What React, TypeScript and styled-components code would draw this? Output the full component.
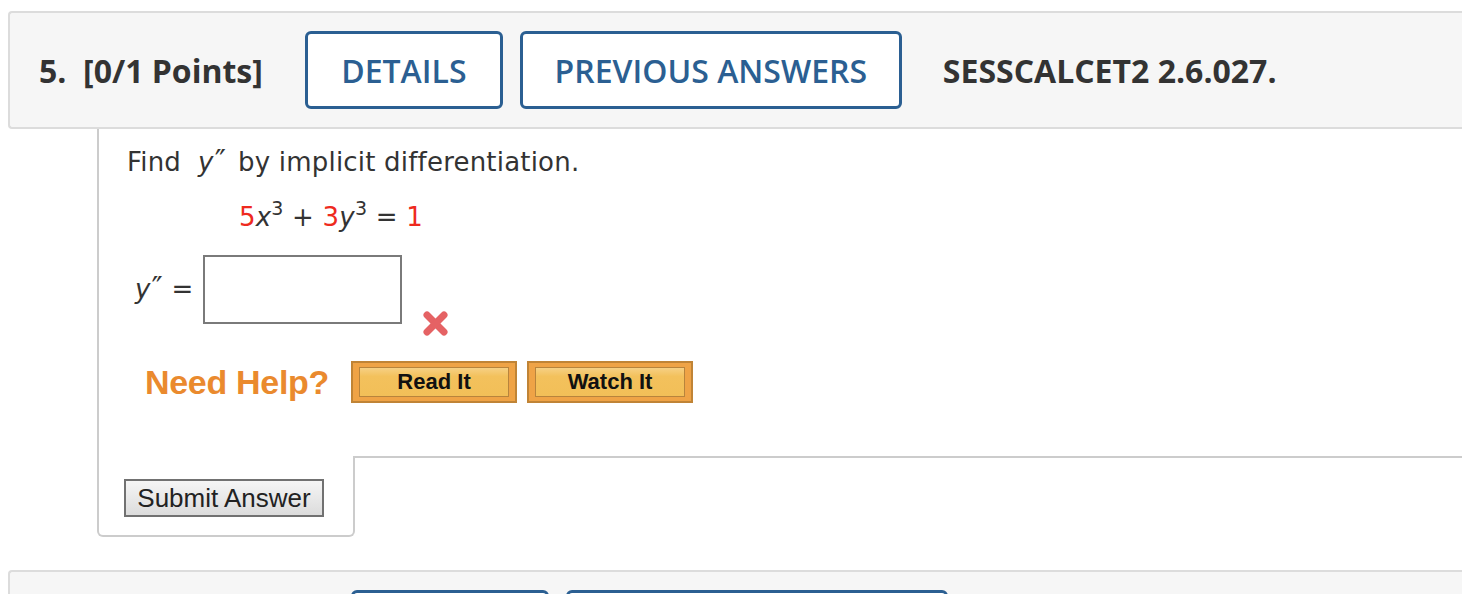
import React from "react";
import styled, { createGlobalStyle } from "styled-components";

const GlobalStyle = createGlobalStyle`
  html, body {
    margin: 0;
    padding: 0;
    background: #ffffff;
    overflow: hidden;
  }
  body {
    font-family: "DejaVu Sans", Verdana, sans-serif;
    color: #333;
  }
`;

const Page = styled.div`
  width: 1500px;
  padding: 11px 0 0 8px;
  display: flex;
  flex-direction: column;
  gap: 33px;
`;

const Question = styled.section`
  display: flex;
  flex-direction: column;
`;

const Header = styled.header`
  display: flex;
  align-items: center;
  height: 114px;
  padding-left: 29px;
  background: #f6f6f6;
  border: 2px solid #dcdcdc;
  border-right: none;
  border-top-left-radius: 4px;
  border-bottom-left-radius: 4px;
  font-family: "Open Sans", sans-serif;
`;

const Title = styled.h2<{ $gap: number }>`
  margin: 0 ${(p) => p.$gap}px 0 0;
  font-size: 32px;
  font-weight: 700;
  color: #333;
  white-space: pre;
`;

const NavButton = styled.button<{ $w: number }>`
  width: ${(p) => p.$w}px;
  height: 78px;
  margin-right: 17px;
  background: #ffffff;
  border: 3px solid #2b5f92;
  border-radius: 6px;
  color: #2b5f92;
  font-family: "Open Sans", sans-serif;
  font-size: 32px;
  font-weight: 600;
  padding: 0;
`;

const Code = styled.span`
  margin-left: 24px;
  font-size: 32px;
  font-weight: 700;
  color: #333;
`;

const Body = styled.div`
  margin-left: 89px;
  display: flex;
  flex-direction: column;
`;

const Content = styled.div`
  border-left: 2px solid #cccccc;
  padding: 17px 0 53px 28px;
  display: flex;
  flex-direction: column;
  font-size: 26px;
  letter-spacing: 0.2px;
  color: #333;
`;

const Prompt = styled.p`
  margin: 0;
  line-height: 32px;
`;

const MathVar = styled.span`
  font-style: italic;
  margin: 0 12px 0 17px;
`;

const Prime = styled.span`
  font-style: normal;
  font-size: 30px;
  line-height: 0;
  margin-left: 1px;
`;

const Equation = styled.div`
  margin: 23px 0 0 112px;
  line-height: 32px;
  white-space: pre;
`;

const Coef = styled.span`
  color: #ee2a1e;
`;

const Ital = styled.i`
  font-style: italic;
`;

const Sup = styled.sup`
  font-size: 19px;
  vertical-align: 11px;
  line-height: 0;
`;

const AnswerRow = styled.div`
  display: flex;
  align-items: flex-start;
  margin: 22px 0 0 8px;
`;

const AnswerLabel = styled.span`
  line-height: 69px;
  margin-right: 10px;
  white-space: pre;
`;

const AnswerInput = styled.input`
  box-sizing: border-box;
  width: 199px;
  height: 69px;
  border: 2px solid #7a7a7a;
  background: #fff;
  outline: none;
`;

const WrongMark = styled.svg`
  margin: 54px 0 0 19px;
`;

const HelpRow = styled.div`
  display: flex;
  align-items: center;
  margin: 23px 0 0 18px;
  height: 42px;
`;

const HelpLabel = styled.span`
  font-family: "Liberation Sans", Arial, sans-serif;
  font-weight: 700;
  font-size: 34px;
  color: #ea8a2e;
  margin-right: 22px;
  letter-spacing: -0.3px;
`;

const HelpButton = styled.button<{ $w: number }>`
  box-sizing: border-box;
  width: ${(p) => p.$w}px;
  height: 42px;
  margin-right: 10px;
  padding: 4px 6px;
  border: 2px solid #c08436;
  background: #efa346;
  display: flex;
`;

const HelpInner = styled.span`
  flex: 1;
  display: flex;
  align-items: center;
  justify-content: center;
  border: 1px solid #b8843c;
  background: linear-gradient(#f6d084 0%, #f3c15c 30%, #f2bf58 100%);
  font-family: "Liberation Sans", Arial, sans-serif;
  font-weight: 700;
  font-size: 22px;
  color: #111;
`;

const Footer = styled.div`
  display: flex;
`;

const SubmitCell = styled.div`
  box-sizing: border-box;
  width: 258px;
  height: 81px;
  border: 2px solid #cccccc;
  border-top: none;
  border-radius: 0 0 6px 6px;
  padding: 23px 0 0 25px;
  display: flex;
  align-items: flex-start;
`;

const SubmitButton = styled.button`
  box-sizing: border-box;
  width: 200px;
  height: 38px;
  border: 2px solid #717171;
  background: linear-gradient(#f5f5f5, #dcdcdc);
  font-family: "Liberation Sans", Arial, sans-serif;
  font-size: 26px;
  color: #222;
  padding: 0;
  line-height: 34px;
`;

const FooterRest = styled.div`
  flex: 1;
  border-top: 2px solid #cccccc;
`;

const Spacer = styled.div`
  height: 40px;
`;

function Cross() {
  return (
    <WrongMark width="29" height="29" viewBox="0 0 29 29">
      <g stroke="#e45a5c" strokeWidth="7" strokeLinecap="round" opacity="0.95">
        <line x1="6" y1="6" x2="23" y2="23" />
        <line x1="23" y1="6" x2="6" y2="23" />
      </g>
    </WrongMark>
  );
}

function QuestionHeader({ title, gap }: { title: string; gap: number }) {
  return (
    <Header>
      <Title $gap={gap}>{title}</Title>
      <NavButton $w={198}>DETAILS</NavButton>
      <NavButton $w={382}>PREVIOUS ANSWERS</NavButton>
      <Code>SESSCALCET2 2.6.027.</Code>
    </Header>
  );
}

export default function App() {
  return (
    <>
      <GlobalStyle />
      <Page>
        <Question>
          <QuestionHeader title={"5.  [0/1 Points]"} gap={42} />
          <Body>
            <Content>
              <Prompt>
                Find
                <MathVar>
                  y<Prime>″</Prime>
                </MathVar>
                by implicit differentiation.
              </Prompt>
              <Equation>
                <Coef>5</Coef>
                <Ital>x</Ital>
                <Sup>3</Sup> + <Coef>3</Coef>
                <Ital>y</Ital>
                <Sup>3</Sup> = <Coef>1</Coef>
              </Equation>
              <AnswerRow>
                <AnswerLabel>
                  <Ital>
                    y<Prime>″</Prime>
                  </Ital>{" "}
                  =
                </AnswerLabel>
                <AnswerInput type="text" aria-label="y double prime" />
                <Cross />
              </AnswerRow>
              <HelpRow>
                <HelpLabel>Need Help?</HelpLabel>
                <HelpButton $w={166}>
                  <HelpInner>Read It</HelpInner>
                </HelpButton>
                <HelpButton $w={166}>
                  <HelpInner>Watch It</HelpInner>
                </HelpButton>
              </HelpRow>
            </Content>
            <Footer>
              <SubmitCell>
                <SubmitButton>Submit Answer</SubmitButton>
              </SubmitCell>
              <FooterRest />
            </Footer>
          </Body>
        </Question>
        <Question>
          <QuestionHeader title={"6.  [0/1.33 Points]"} gap={42} />
          <Spacer />
        </Question>
      </Page>
    </>
  );
}
